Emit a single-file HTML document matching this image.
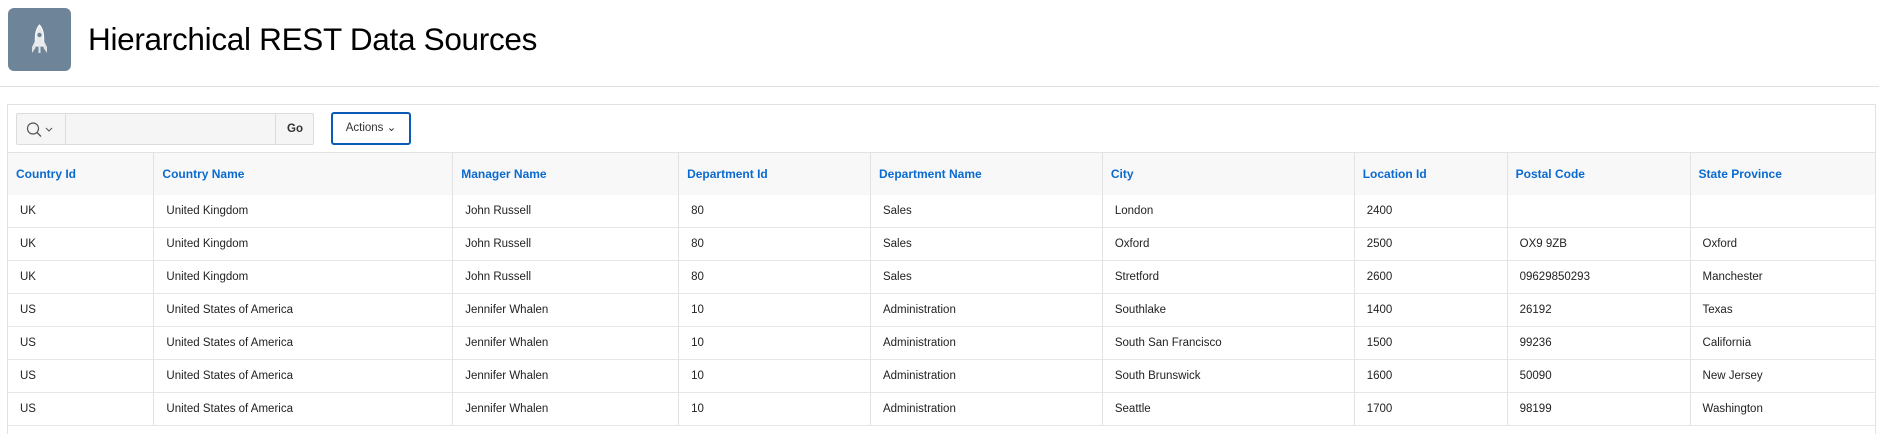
<!DOCTYPE html>
<html><head><meta charset="utf-8"><style>
*{box-sizing:border-box;margin:0;padding:0}
body{width:1879px;height:426px;overflow:hidden;background:#fff;font-family:"Liberation Sans",sans-serif;position:relative;color:#000}
.icon{position:absolute;left:8px;top:8px;width:63px;height:63px;border-radius:6px;background:#6e8498}
h1{position:absolute;left:88px;top:21px;font-size:31.5px;font-weight:normal;letter-spacing:-0.3px;color:#000}
.hdr{position:absolute;left:0;top:86px;width:1879px;height:1px;background:#e0e0e0}
.region{position:absolute;left:7px;top:104px;width:1869px;height:330px;border:1px solid #e2e2e2;border-bottom:none;background:#fff}
.tb{position:absolute;left:0;top:0;width:100%;height:47px;background:#fff}
.search{position:absolute;left:8px;top:8px;width:298px;height:32px;border:1px solid #dcdcdc;background:#f5f5f5;border-radius:2px}
.search .sep1{position:absolute;left:48px;top:0;width:1px;height:30px;background:#dcdcdc}
.search .sep2{position:absolute;left:258px;top:0;width:1px;height:30px;background:#dcdcdc}
.search .go{position:absolute;left:259px;top:0;width:38px;height:30px;line-height:30px;text-align:center;font-size:11.5px;font-weight:bold;color:#333}
.act{position:absolute;left:323px;top:7px;width:80px;height:33px;border:2px solid #0a5bb5;border-radius:3px;font-size:11.5px;line-height:29px;text-align:center;color:#333}
table{position:absolute;left:0;top:47px;border-collapse:collapse;font-size:11.5px}
th{height:42px;background:#f8f8f8;color:#0a6ad0;text-align:left;font-weight:bold;padding-left:8px;border-left:1px solid #e2e2e2;border-top:1px solid #e2e2e2;font-size:12px}
td{height:33px;padding-left:12px;border-left:1px solid #e2e2e2;border-bottom:1px solid #e6e6e6;color:#222}
th:first-child,td:first-child{border-left:none}
</style></head><body>
<div class="icon"><svg width="63" height="63" viewBox="0 0 63 63"><path d="M31.5 17 C27 22 27 29 27.5 38 L35.5 38 C36 29 36 22 31.5 17Z" fill="#e8ebee" stroke="#fff" stroke-width="1"/><path d="M27.5 32 L24 39 L24 45 L27.5 40Z M35.5 32 L39 39 L39 45 L35.5 40Z" fill="#dfe3e7"/><circle cx="31.5" cy="27" r="2.2" fill="#6e8498"/><path d="M31.5 37 L31.5 45" stroke="#dfe3e7" stroke-width="2"/></svg></div>
<h1>Hierarchical REST Data Sources</h1>
<div class="hdr"></div>
<div class="region">
<div class="tb">
<div class="search"><svg style="position:absolute;left:8px;top:7px" width="34" height="18" viewBox="0 0 34 18"><circle cx="8" cy="7.5" r="5.5" fill="none" stroke="#555" stroke-width="1.2"/><path d="M12 11.5 L16 15.5" stroke="#555" stroke-width="1.3"/><path d="M21 7 L24 10 L27 7" fill="none" stroke="#555" stroke-width="1"/></svg><div class="sep1"></div><div class="sep2"></div><div class="go">Go</div></div>
<div class="act">Actions &#8964;</div>
</div>
<table>
<colgroup><col style="width:146px"><col style="width:299px"><col style="width:226px"><col style="width:192px"><col style="width:232px"><col style="width:252px"><col style="width:153px"><col style="width:183px"><col style="width:185px"></colgroup>
<tr><th>Country Id</th><th>Country Name</th><th>Manager Name</th><th>Department Id</th><th>Department Name</th><th>City</th><th>Location Id</th><th>Postal Code</th><th>State Province</th></tr>
<tr><td>UK</td><td>United Kingdom</td><td>John Russell</td><td>80</td><td>Sales</td><td>London</td><td>2400</td><td></td><td></td></tr>
<tr><td>UK</td><td>United Kingdom</td><td>John Russell</td><td>80</td><td>Sales</td><td>Oxford</td><td>2500</td><td>OX9 9ZB</td><td>Oxford</td></tr>
<tr><td>UK</td><td>United Kingdom</td><td>John Russell</td><td>80</td><td>Sales</td><td>Stretford</td><td>2600</td><td>09629850293</td><td>Manchester</td></tr>
<tr><td>US</td><td>United States of America</td><td>Jennifer Whalen</td><td>10</td><td>Administration</td><td>Southlake</td><td>1400</td><td>26192</td><td>Texas</td></tr>
<tr><td>US</td><td>United States of America</td><td>Jennifer Whalen</td><td>10</td><td>Administration</td><td>South San Francisco</td><td>1500</td><td>99236</td><td>California</td></tr>
<tr><td>US</td><td>United States of America</td><td>Jennifer Whalen</td><td>10</td><td>Administration</td><td>South Brunswick</td><td>1600</td><td>50090</td><td>New Jersey</td></tr>
<tr><td>US</td><td>United States of America</td><td>Jennifer Whalen</td><td>10</td><td>Administration</td><td>Seattle</td><td>1700</td><td>98199</td><td>Washington</td></tr>
</table>
</div>
</body></html>
